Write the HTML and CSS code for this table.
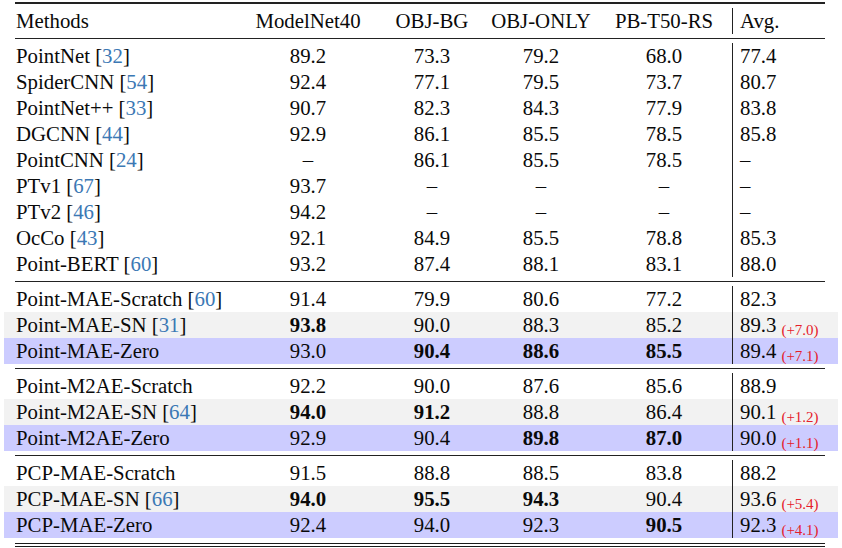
FILE: index.html
```html
<!DOCTYPE html>
<html lang="en">
<head>
<meta charset="utf-8">
<title>Results table</title>
<link rel="stylesheet" href="styles.css">
</head>
<body>
<div class="table">
  <div class="group head">
    <div class="row">
      <div class="c name">Methods</div>
      <div class="c num">ModelNet40</div>
      <div class="c num">OBJ-BG</div>
      <div class="c num">OBJ-ONLY</div>
      <div class="c num">PB-T50-RS</div>
      <div class="c avg">Avg.</div>
    </div>
  </div>
  <div class="group">
    <div class="row"><div class="c name">PointNet [<span class="cite">32</span>]</div><div class="c num">89.2</div><div class="c num">73.3</div><div class="c num">79.2</div><div class="c num">68.0</div><div class="c avg">77.4</div></div>
    <div class="row"><div class="c name">SpiderCNN [<span class="cite">54</span>]</div><div class="c num">92.4</div><div class="c num">77.1</div><div class="c num">79.5</div><div class="c num">73.7</div><div class="c avg">80.7</div></div>
    <div class="row"><div class="c name">PointNet++ [<span class="cite">33</span>]</div><div class="c num">90.7</div><div class="c num">82.3</div><div class="c num">84.3</div><div class="c num">77.9</div><div class="c avg">83.8</div></div>
    <div class="row"><div class="c name">DGCNN [<span class="cite">44</span>]</div><div class="c num">92.9</div><div class="c num">86.1</div><div class="c num">85.5</div><div class="c num">78.5</div><div class="c avg">85.8</div></div>
    <div class="row"><div class="c name">PointCNN [<span class="cite">24</span>]</div><div class="c num">–</div><div class="c num">86.1</div><div class="c num">85.5</div><div class="c num">78.5</div><div class="c avg">–</div></div>
    <div class="row"><div class="c name">PTv1 [<span class="cite">67</span>]</div><div class="c num">93.7</div><div class="c num">–</div><div class="c num">–</div><div class="c num">–</div><div class="c avg">–</div></div>
    <div class="row"><div class="c name">PTv2 [<span class="cite">46</span>]</div><div class="c num">94.2</div><div class="c num">–</div><div class="c num">–</div><div class="c num">–</div><div class="c avg">–</div></div>
    <div class="row"><div class="c name">OcCo [<span class="cite">43</span>]</div><div class="c num">92.1</div><div class="c num">84.9</div><div class="c num">85.5</div><div class="c num">78.8</div><div class="c avg">85.3</div></div>
    <div class="row"><div class="c name">Point-BERT [<span class="cite">60</span>]</div><div class="c num">93.2</div><div class="c num">87.4</div><div class="c num">88.1</div><div class="c num">83.1</div><div class="c avg">88.0</div></div>
  </div>
  <div class="group">
    <div class="row"><div class="c name">Point-MAE-Scratch [<span class="cite">60</span>]</div><div class="c num">91.4</div><div class="c num">79.9</div><div class="c num">80.6</div><div class="c num">77.2</div><div class="c avg">82.3</div></div>
    <div class="row sn"><div class="c name">Point-MAE-SN [<span class="cite">31</span>]</div><div class="c num"><b>93.8</b></div><div class="c num">90.0</div><div class="c num">88.3</div><div class="c num">85.2</div><div class="c avg">89.3<span class="delta">(+7.0)</span></div></div>
    <div class="row zero"><div class="c name">Point-MAE-Zero</div><div class="c num">93.0</div><div class="c num"><b>90.4</b></div><div class="c num"><b>88.6</b></div><div class="c num"><b>85.5</b></div><div class="c avg">89.4<span class="delta">(+7.1)</span></div></div>
  </div>
  <div class="group">
    <div class="row"><div class="c name">Point-M2AE-Scratch</div><div class="c num">92.2</div><div class="c num">90.0</div><div class="c num">87.6</div><div class="c num">85.6</div><div class="c avg">88.9</div></div>
    <div class="row sn"><div class="c name">Point-M2AE-SN [<span class="cite">64</span>]</div><div class="c num"><b>94.0</b></div><div class="c num"><b>91.2</b></div><div class="c num">88.8</div><div class="c num">86.4</div><div class="c avg">90.1<span class="delta">(+1.2)</span></div></div>
    <div class="row zero"><div class="c name">Point-M2AE-Zero</div><div class="c num">92.9</div><div class="c num">90.4</div><div class="c num"><b>89.8</b></div><div class="c num"><b>87.0</b></div><div class="c avg">90.0<span class="delta">(+1.1)</span></div></div>
  </div>
  <div class="group last">
    <div class="row"><div class="c name">PCP-MAE-Scratch</div><div class="c num">91.5</div><div class="c num">88.8</div><div class="c num">88.5</div><div class="c num">83.8</div><div class="c avg">88.2</div></div>
    <div class="row sn"><div class="c name">PCP-MAE-SN [<span class="cite">66</span>]</div><div class="c num"><b>94.0</b></div><div class="c num"><b>95.5</b></div><div class="c num"><b>94.3</b></div><div class="c num">90.4</div><div class="c avg">93.6<span class="delta">(+5.4)</span></div></div>
    <div class="row zero"><div class="c name">PCP-MAE-Zero</div><div class="c num">92.4</div><div class="c num">94.0</div><div class="c num">92.3</div><div class="c num"><b>90.5</b></div><div class="c avg">92.3<span class="delta">(+4.1)</span></div></div>
  </div>
</div>
</body>
</html>
```

FILE: styles.css
```css
html, body {
  margin: 0;
  padding: 0;
  background: #fff;
}
body {
  font-family: "Liberation Serif", "Times New Roman", serif;
  font-size: 20.8px;
  color: #0a0a0a;
}
.table {
  margin: 2px 0 0 15px;
  width: 810px;
  border-top: 2px solid #222;
  border-bottom: 4px double #1a1a1a;
}
.group {
  border-top: 1px solid #222;
  padding: 4px 0;
}
.group.head {
  border-top: none;
}
.group.last {
  padding-bottom: 5px;
}
.row {
  display: grid;
  grid-template-columns: 223px 140px 108px 110px 136px 93px;
  height: 26px;
  margin: 0 -13px 0 -11px;
  padding: 0 13px 0 11px;
}
.row.sn {
  background: #f2f2f2;
}
.row.zero {
  background: #ccccff;
}
.c {
  display: flex;
  align-items: center;
  line-height: 26px;
  white-space: nowrap;
}
.name {
  padding-left: 1px;
}
.num {
  justify-content: center;
}
.avg {
  border-left: 1px solid #222;
  padding-left: 7px;
}
.cite {
  color: #3b78b4;
}
b {
  font-weight: bold;
}
.delta {
  color: #e5202a;
  font-size: 15px;
  position: relative;
  top: 5px;
  margin-left: 5px;
}
```
